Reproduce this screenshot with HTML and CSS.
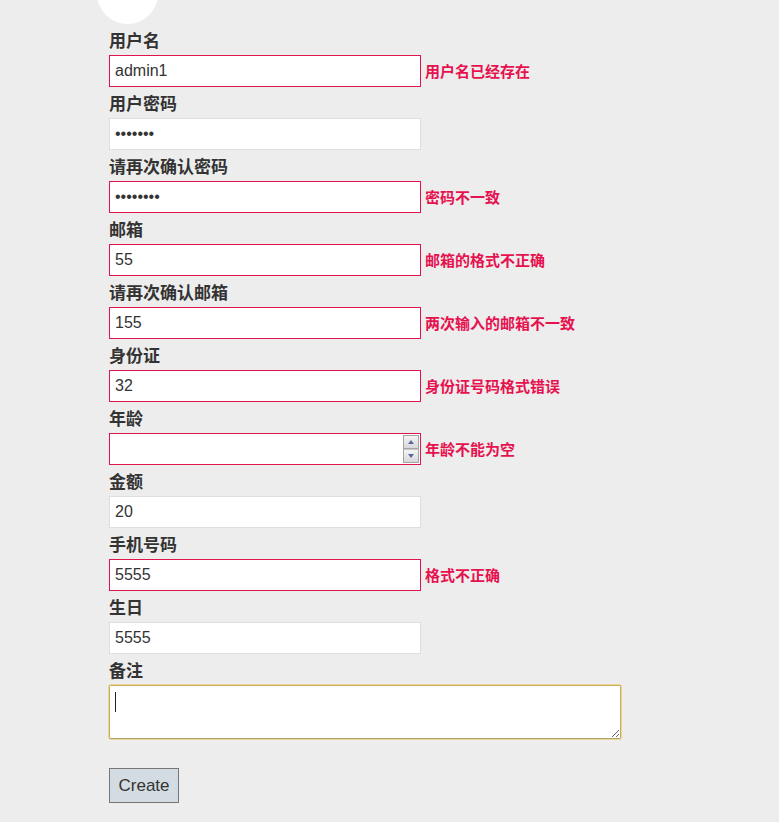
FILE: index.html
```html
<!DOCTYPE html>
<html lang="zh-CN">
<head>
<meta charset="utf-8">
<title>Create</title>
<link rel="stylesheet" href="styles.css">
</head>
<body>
<div class="page">
  <div class="logo"></div>
  <form class="form">
    <div class="field">
      <label class="label">用户名</label>
      <div class="row">
        <input class="input invalid" type="text" value="admin1">
        <span class="error">用户名已经存在</span>
      </div>
    </div>
    <div class="field">
      <label class="label">用户密码</label>
      <div class="row">
        <input class="input" type="password" value="1234567">
      </div>
    </div>
    <div class="field">
      <label class="label">请再次确认密码</label>
      <div class="row">
        <input class="input invalid" type="password" value="12345678">
        <span class="error">密码不一致</span>
      </div>
    </div>
    <div class="field">
      <label class="label">邮箱</label>
      <div class="row">
        <input class="input invalid" type="text" value="55">
        <span class="error">邮箱的格式不正确</span>
      </div>
    </div>
    <div class="field">
      <label class="label">请再次确认邮箱</label>
      <div class="row">
        <input class="input invalid" type="text" value="155">
        <span class="error">两次输入的邮箱不一致</span>
      </div>
    </div>
    <div class="field">
      <label class="label">身份证</label>
      <div class="row">
        <input class="input invalid" type="text" value="32">
        <span class="error">身份证号码格式错误</span>
      </div>
    </div>
    <div class="field">
      <label class="label">年龄</label>
      <div class="row">
        <div class="number-wrap">
          <input class="input invalid" type="number" value="">
          <div class="spinner">
            <span class="spin up"></span>
            <span class="spin down"></span>
          </div>
        </div>
        <span class="error">年龄不能为空</span>
      </div>
    </div>
    <div class="field">
      <label class="label">金额</label>
      <div class="row">
        <input class="input" type="text" value="20">
      </div>
    </div>
    <div class="field">
      <label class="label">手机号码</label>
      <div class="row">
        <input class="input invalid" type="text" value="5555">
        <span class="error">格式不正确</span>
      </div>
    </div>
    <div class="field">
      <label class="label">生日</label>
      <div class="row">
        <input class="input" type="text" value="5555">
      </div>
    </div>
    <div class="field">
      <label class="label">备注</label>
      <div class="row">
        <div class="textarea-wrap">
          <textarea class="textarea"></textarea>
          <span class="caret"></span>
        </div>
      </div>
    </div>
    <div class="actions">
      <button class="button" type="button">Create</button>
    </div>
  </form>
</div>
</body>
</html>
```

FILE: styles.css
```css
html, body {
  margin: 0;
  padding: 0;
  background: #ededed;
}

body {
  font-family: "Liberation Sans", Arial, "Noto Sans CJK SC", sans-serif;
  color: #333;
  height: 822px;
  overflow: hidden;
}

.page {
  padding-left: 109px;
}

.logo {
  width: 61px;
  height: 61px;
  border-radius: 50%;
  background: #fff;
  margin: -37px 0 5px -12px;
}

.form {
  display: flex;
  flex-direction: column;
}

.field {
  display: flex;
  flex-direction: column;
  margin-bottom: 5px;
}

.label {
  display: block;
  font-family: "Noto Sans CJK SC", sans-serif;
  font-weight: 700;
  font-size: 17px;
  line-height: 21px;
  height: 21px;
  margin-bottom: 5px;
  color: #333;
}

.row {
  display: flex;
  align-items: center;
  gap: 4px;
}

.input {
  box-sizing: border-box;
  width: 312px;
  height: 32px;
  margin: 0;
  padding: 0 5px;
  border: 1px solid #dedede;
  background: #fff;
  font-family: "Liberation Sans", Arial, sans-serif;
  font-size: 16px;
  color: #333;
  outline: none;
}

.input.invalid {
  border-color: #e0144f;
}

.input[type=number] {
  -moz-appearance: textfield;
}

.input::-webkit-outer-spin-button,
.input::-webkit-inner-spin-button {
  -webkit-appearance: none;
  margin: 0;
}

.error {
  font-family: "Noto Sans CJK SC", sans-serif;
  font-weight: 700;
  font-size: 15px;
  line-height: 20px;
  color: #e6124f;
}

.number-wrap {
  position: relative;
  width: 312px;
  height: 32px;
}

.spinner {
  position: absolute;
  top: 2px;
  right: 2px;
  bottom: 2px;
  width: 16px;
  display: flex;
  flex-direction: column;
}

.spin {
  flex: 1;
  box-sizing: border-box;
  border: 1px solid #a4a4a4;
  background: linear-gradient(#f4f4f4, #d8d8dc);
  display: flex;
  align-items: center;
  justify-content: center;
}

.spin.down {
  border-top-color: #c8c8c8;
}

.spin::after {
  content: "";
  width: 0;
  height: 0;
  border-left: 3px solid transparent;
  border-right: 3px solid transparent;
}

.spin.up::after {
  border-bottom: 4px solid #5a6aa0;
}

.spin.down::after {
  border-top: 4px solid #5a6aa0;
}

.textarea-wrap {
  position: relative;
  width: 512px;
  height: 54px;
}

.textarea {
  box-sizing: border-box;
  display: block;
  width: 512px;
  height: 54px;
  margin: 0;
  padding: 4px 6px;
  border: 1px solid #c9ad5c;
  border-bottom-color: #a9a66a;
  border-radius: 2px;
  box-shadow: 0 0 0 1px #ecd596;
  background: #fff;
  font-family: "Liberation Sans", Arial, sans-serif;
  font-size: 16px;
  color: #333;
  outline: none;
  resize: both;
}

.caret {
  position: absolute;
  left: 6px;
  top: 7px;
  width: 1px;
  height: 20px;
  background: #222;
}

.actions {
  display: flex;
  padding-top: 24px;
}

.button {
  box-sizing: border-box;
  width: 70px;
  height: 35px;
  margin: 0;
  padding: 0;
  border: 1px solid #767676;
  border-radius: 0;
  background: #d3dce2;
  font-family: "Liberation Sans", Arial, sans-serif;
  font-size: 17px;
  color: #333;
}
```
